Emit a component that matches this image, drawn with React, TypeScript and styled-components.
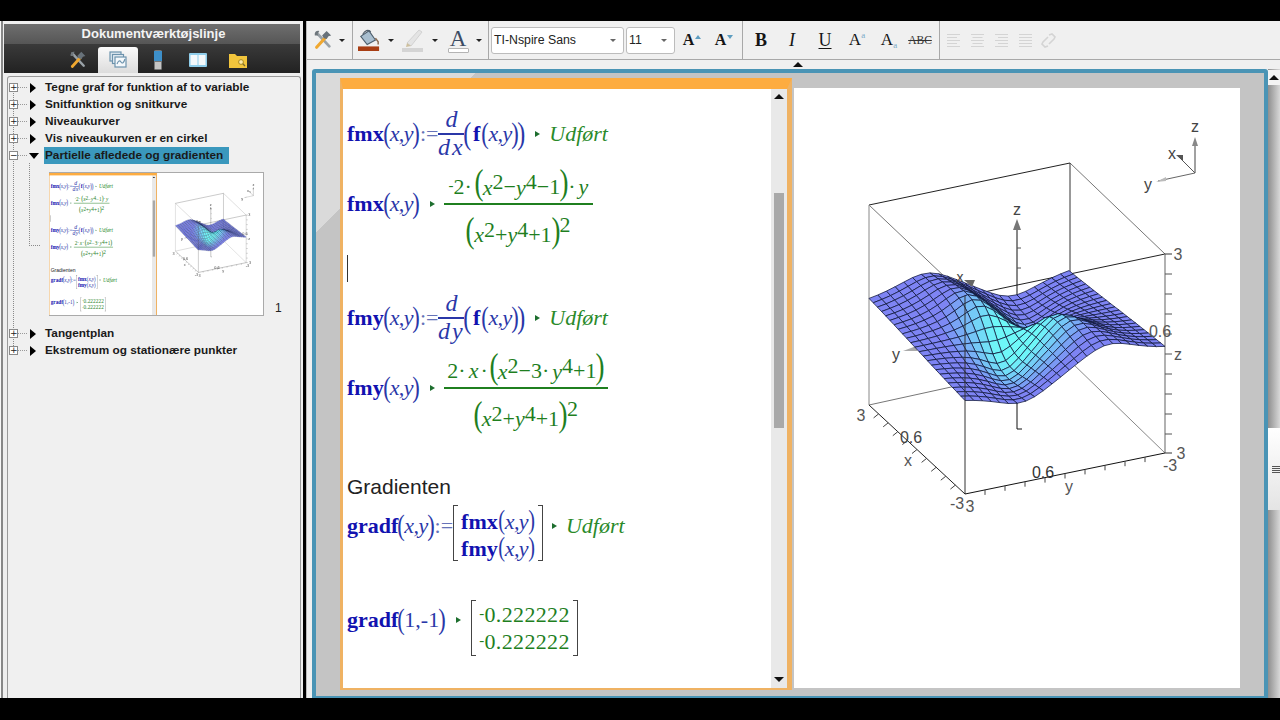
import React, { useMemo } from "react";
import styled, { createGlobalStyle } from "styled-components";

const Global = createGlobalStyle`
  html, body { margin: 0; padding: 0; background: #000; width: 1280px; height: 720px; overflow: hidden; }
  * { box-sizing: border-box; }
`;

const Root = styled.div`
  width: 1280px; height: 720px; background: #000; padding: 21px 0 22px; display: flex;
  font-family: "Liberation Sans", Arial, sans-serif;
`;

/* ---------- Sidebar ---------- */
const Sidebar = styled.aside`
  width: 303px; height: 677px; background: #efefef; padding: 3px 3px 0 4px;
  border-left: 1px solid #f8f8f8; display: flex; flex-direction: column;
  box-shadow: inset 3px 0 0 -1px #888;
`;
const SideTitle = styled.div`
  height: 20px; margin-left: -1px; padding-left: 3px; background: linear-gradient(#6e6e6e, #565656); color: #f4f4f4;
  font-size: 13px; font-weight: bold; text-align: center; line-height: 20px;
`;
const TabBar = styled.div`
  height: 29px; margin-left: -1px; background: linear-gradient(#3a3a3a, #222); display: flex; align-items: flex-end;
  padding-left: 54px;
`;
const Tab = styled.div<{ $active?: boolean }>`
  width: 40px; height: 26px; display: flex; align-items: center; justify-content: center;
  border-radius: 3px 3px 0 0; background: ${(p) => (p.$active ? "linear-gradient(#fafafa,#dcdcdc)" : "transparent")};
`;
const TreePanel = styled.div`
  position: relative; flex: 1; margin: 3px 0 0 2px; width: 294px; background: #f0f0f0;
  border: 1px solid #9a9a9a; border-bottom: none; border-radius: 3px 3px 0 0; padding: 2px 0 0 1px;
`;
const VDots = styled.div<{ $left: number; $top: number; $h: number }>`
  position: absolute; left: ${(p) => p.$left}px; top: ${(p) => p.$top}px; height: ${(p) => p.$h}px;
  border-left: 1px dotted #8a8a8a;
`;
const HDots = styled.div<{ $left: number; $top: number; $w: number }>`
  position: absolute; left: ${(p) => p.$left}px; top: ${(p) => p.$top}px; width: ${(p) => p.$w}px;
  border-top: 1px dotted #8a8a8a;
`;
const TreeRow = styled.div`
  display: flex; align-items: center; height: 17px;
`;
const PlusBox = styled.span`
  position: relative; z-index: 1; width: 9px; height: 9px; background: #fff; border: 1px solid #8a8a8a; flex: none;
  color: #222; font-size: 9px; line-height: 7px; text-align: center; font-family: "DejaVu Sans", sans-serif;
`;
const RowDots = styled.span`
  width: 9px; border-top: 1px dotted #999; flex: none;
`;
const ArrowSlot = styled.span`
  width: 17px; flex: none; display: flex; padding-left: 3px;
`;
const TriRight = styled.span`
  width: 0; height: 0; border-left: 6px solid #000; border-top: 5px solid transparent; border-bottom: 5px solid transparent;
`;
const TriDown = styled.span`
  width: 0; height: 0; margin-left: -1px; border-top: 6px solid #000; border-left: 5px solid transparent; border-right: 5px solid transparent;
`;
const RowLabel = styled.span<{ $selected?: boolean }>`
  font-size: 11.8px; font-weight: bold; line-height: 17px; height: 17px; color: #1a1a1a; white-space: nowrap;
  padding: 0 6px 0 1px; background: ${(p) => (p.$selected ? "#3a98bd" : "transparent")};
`;
const ThumbRow = styled.div`
  display: flex; margin: 8px 0 9px 40px; align-items: flex-end;
`;
const ThumbFrame = styled.div`
  width: 215px; height: 144px; overflow: hidden; border-right: 1px solid #aaa; border-top: 1px solid #aaa; border-bottom: 1px solid #aaa; background: #fff;
`;
const ThumbScale = styled.div`
  width: 900px; transform: scale(0.239); transform-origin: 0 0;
`;
const PageNumber = styled.span`
  font-size: 12px; color: #222; margin: 0 0 1px 11px;
`;

/* ---------- Toolbar ---------- */
const Main = styled.main`
  flex: 1; height: 677px; background: #f0f0f0; margin-left: 3px; border-left: 1px solid #bbb; display: flex; flex-direction: column;
`;
const Toolbar = styled.div`
  height: 39px; flex: none; display: flex; align-items: stretch; border-bottom: 1px solid #a8a8a8;
`;
const ToolGroup = styled.div<{ $w?: number; $pl: number }>`
  display: flex; align-items: center; padding-left: ${(p) => p.$pl}px; width: ${(p) => (p.$w ? `${p.$w}px` : "auto")};
  flex: none; border-right: 1px solid ${(p) => (p.$w ? "#a8a8a8" : "transparent")};
`;
const Slot = styled.div<{ $w: number }>`
  width: ${(p) => p.$w}px; display: flex; justify-content: center; align-items: center; flex: none; height: 100%;
  font-family: "Liberation Serif", serif; color: #151515;
`;
const Caret = styled.span<{ $color?: string }>`
  width: 0; height: 0; border-top: 3px solid ${(p) => p.$color ?? "#222"}; border-left: 3px solid transparent; border-right: 3px solid transparent;
`;
const Select = styled.div<{ $w: number }>`
  width: ${(p) => p.$w}px; height: 27px; background: #fff; border: 1px solid #bcbcbc; border-radius: 3px; display: flex;
  align-items: center; justify-content: space-between; padding: 0 7px 0 2px; font-size: 12.3px; color: #222; flex: none;
`;
const SmallGap = styled.div`width: 2px; flex: none;`;
const Glyph = styled.span<{ $size: number; $b?: boolean; $i?: boolean; $u?: boolean }>`
  font-size: ${(p) => p.$size}px; font-weight: ${(p) => (p.$b ? "bold" : "normal")}; font-style: ${(p) => (p.$i ? "italic" : "normal")};
  text-decoration: ${(p) => (p.$u ? "underline" : "none")}; text-underline-offset: 2px;
`;
const Small = styled.span<{ $align: number }>`
  font-size: 9px; color: #7aaac8; vertical-align: ${(p) => p.$align}px; font-family: "Liberation Serif", serif;
`;
const MiniTri = styled.span<{ $down?: boolean }>`
  display: inline-block; width: 0; height: 0; margin: 0 0 6px 1px; border-left: 3px solid transparent; border-right: 3px solid transparent;
  ${(p) => (p.$down ? "border-top: 4px solid #5d9dc0;" : "border-bottom: 4px solid #5d9dc0;")}
`;
const Strike = styled.span`
  font-size: 11.5px; color: #333; text-decoration: line-through;
`;
const FontA = styled.span`
  display: flex; flex-direction: column; align-items: center; font-size: 23px; line-height: 21px; color: #3c4c64;
`;
const UnderBar = styled.span`
  width: 21px; height: 5px; background: #fff; border: 1px solid #b4b4b4; border-radius: 1px; margin-top: -1px;
`;
const StripBelow = styled.div`
  height: 9px; flex: none; padding: 2px 0 0 486px; display: flex;
`;
const UpTri = styled.span`
  width: 0; height: 0; border-bottom: 5px solid #111; border-left: 5px solid transparent; border-right: 5px solid transparent;
`;

/* ---------- Document frame ---------- */
const Work = styled.div`
  flex: 1; display: flex; min-height: 0; padding-left: 5px;
`;
const Frame = styled.div`
  width: 956px; height: 629px; border: 4px solid #4a94b5; border-bottom-width: 2px; border-radius: 3px 3px 0 0;
  background: linear-gradient(135deg, #dadada 113px, #c4c4c4 113px); padding: 5px 0 0 24px;
`;
const OuterScroll = styled.div`
  width: 12px; height: 629px; flex: none; background: linear-gradient(90deg, #8f8f8f, #d8d8d8); display: flex; flex-direction: column;
`;
const OuterArrow = styled.div`
  height: 15px; background: #f4f4f4; display: flex; align-items: center; justify-content: center; margin-top: 1px;
`;
const OuterThumb = styled.div`
  height: 82px; margin-top: 343px; background: linear-gradient(#ffffff, #e4e4e4); display: flex; flex-direction: column; gap: 1px;
  align-items: flex-end; justify-content: center;
`;
const Grip = styled.span`
  width: 8px; height: 1px; background: #555;
`;

const DocRow = styled.div`
  display: flex; width: 900px; height: 612px;
`;
const Pane = styled.div`
  width: 452px; height: 612px; flex: none; background: #fff; border: 3px solid #efb263; border-top: 11px solid #fdac40; border-right-width: 5px; border-bottom-width: 2px; display: flex;
`;
const Sheet = styled.div`
  flex: 1; display: flex; flex-direction: column; padding: 20px 0 0 4px; background: #fff; font-family: "Liberation Serif", serif; overflow: hidden;
`;
const PaneScroll = styled.div`
  width: 16px; flex: none; background: #e9e9e9; display: flex; flex-direction: column; align-items: center; padding-top: 5px;
`;
const ScrollThumb = styled.div`
  width: 10px; height: 235px; background: #a9a9a9; margin: 94px 0 249px;
`;
const DownTri = styled.span`
  width: 0; height: 0; border-top: 5px solid #111; border-left: 5px solid transparent; border-right: 5px solid transparent;
`;
const PlotSheet = styled.div`
  width: 446px; height: 600px; margin: 10px 0 0 2px; background: #fff; flex: none;
`;

/* ---------- Math ---------- */
const MathRow = styled.div<{ $h: number; $mt?: number }>`
  display: flex; align-items: center; height: ${(p) => p.$h}px; margin-top: ${(p) => p.$mt ?? 0}px; font-size: 22px; line-height: 1; white-space: nowrap; flex: none;
`;
const Fn = styled.span<{ $mx?: number }>`
  font-weight: bold; color: #1212b0; margin: 0 ${(p) => p.$mx ?? 0}px;
`;
const Arg = styled.span`
  font-style: italic; color: #2a37a8; letter-spacing: -0.6px;
`;
const Num = styled.span`
  color: #2a37a8;
`;
const Op = styled.span`
  color: #6673b8; margin: 0 0 0 1px;
`;
const Paren = styled.span<{ $s: number; $c?: string }>`
  font-size: ${(p) => p.$s}px; line-height: 1; font-weight: normal; font-style: normal; display: inline-block;
  color: ${(p) => p.$c ?? "#2a37a8"}; margin: 0 -${(p) => Math.round(p.$s * 0.05)}px; transform: scaleX(0.75) translateY(-1px);
`;
const Arrow = styled.span<{ $l?: number; $r?: number }>`
  width: 0; height: 0; flex: none; margin: 0 ${(p) => p.$r ?? 9}px 0 ${(p) => p.$l ?? 11}px; border-left: 5px solid #1d6e2e;
  border-top: 3px solid transparent; border-bottom: 3px solid transparent;
`;
const Done = styled.span`
  color: #2a8a2a; font-style: italic;
`;
const Frac = styled.span<{ $w: number }>`
  display: inline-flex; flex-direction: column; align-items: center; flex: none; width: ${(p) => p.$w}px;
`;
const DFracTop = styled.span`
  display: flex; height: 24px; align-items: flex-end; justify-content: center; color: #2a37a8; width: 100%; font-size: 24px; padding-bottom: 2px;
`;
const DFracBottom = styled.span`
  display: flex; height: 24px; align-items: flex-start; justify-content: center; color: #2a37a8; width: 100%; font-size: 24px; letter-spacing: 2px;
`;
const GreenPart = styled.span<{ $pt?: number }>`
  display: flex; height: 41px; align-items: center; justify-content: center; color: #1f7f1f; width: 100%; padding-top: ${(p) => p.$pt ?? 0}px;
`;
const FracLine = styled.span<{ $c: string }>`
  display: block; width: 100%; height: 2px; background: ${(p) => p.$c}; flex: none;
`;
const It = styled.span`
  font-style: italic;
`;
const Shift = styled.span<{ $y: number; $mr?: number; $i?: boolean; $s?: number }>`
  display: inline-block; transform: translateY(${(p) => p.$y}px); margin-right: ${(p) => p.$mr ?? 0}px;
  font-style: ${(p) => (p.$i ? "italic" : "normal")}; font-size: ${(p) => p.$s ?? 22}px;
`;
const Bracket = styled.span<{ $right?: boolean; $c: string }>`
  width: 5px; align-self: stretch; flex: none; border: 1px solid ${(p) => p.$c};
  ${(p) => (p.$right ? "border-left: none;" : "border-right: none;")}
`;
const Matrix = styled.span<{ $h: number; $dy: number }>`
  display: inline-flex; height: ${(p) => p.$h}px; flex: none; transform: translateY(${(p) => p.$dy}px);
`;
const MatrixCol = styled.span<{ $pt?: number }>`
  display: flex; flex-direction: column; justify-content: space-around; padding: ${(p) => p.$pt ?? 0}px 3px 0;
`;
const MatrixCell = styled.span`
  display: flex; align-items: center; height: 27px;
`;
const GNum = styled.span`
  color: #1f7f1f; letter-spacing: 0.35px; font-size: 22px;
`;
const Tiny = styled.span`
  font-size: 15px; vertical-align: 4px;
`;
const Cursor = styled.div`
  width: 1px; height: 27px; margin-top: 9px; background: #333; flex: none;
`;
const Heading = styled.div`
  font-family: "Liberation Sans", sans-serif; font-size: 21px; line-height: 24px; color: #222; margin-top: 45px; flex: none;
`;

/* ---------- Plot ---------- */
const f = (x: number, y: number) => (2 * x * y) / (x * x + y * y * y * y + 1);
const P = (x: number, y: number, z: number): [number, number] => [
  1017 - 16 * x - 33.33 * y,
  329 - 14.83 * x + 6.83 * y - 33.17 * z,
];
const mix = (t: number) => {
  const a = [126, 132, 244];
  const b = [110, 248, 248];
  const c = a.map((v, i) => Math.round(v + (b[i] - v) * t));
  return `rgb(${c[0]},${c[1]},${c[2]})`;
};

const Surface: React.FC = () => {
  const cells = useMemo(() => {
    const n = 23;
    const out: { pts: string; fill: string; key: string }[] = [];
    const step = 6 / n;
    for (let i = 0; i < n; i++) {
      const x0 = 3 - i * step;
      const x1 = x0 - step;
      for (let j = 0; j < n; j++) {
        const y0 = -3 + j * step;
        const y1 = y0 + step;
        const pts = [
          P(x0, y0, f(x0, y0)),
          P(x1, y0, f(x1, y0)),
          P(x1, y1, f(x1, y1)),
          P(x0, y1, f(x0, y1)),
        ]
          .map((p) => `${p[0].toFixed(1)},${p[1].toFixed(1)}`)
          .join(" ");
        const cx = (x0 + x1) / 2;
        const cy = (y0 + y1) / 2;
        const d = Math.hypot(cx + 0.3, (cy - 0.1) * 1.15);
        let t = 1.45 - 0.62 * d;
        const shade = Math.max(0, Math.min(1, 0.5 * (f(cx - 0.1, cy) - f(cx + 0.1, cy)) / 0.2));
        t = t - 0.25 * shade;
        t = Math.max(0, Math.min(1, t));
        out.push({ pts, fill: mix(t), key: `${i}-${j}` });
      }
    }
    return out;
  }, []);
  return (
    <>
      {cells.map((c) => (
        <polygon key={c.key} points={c.pts} fill={c.fill} stroke="#0e1638" strokeWidth={0.75} />
      ))}
    </>
  );
};

const ticks = (ax: number, ay: number, bx: number, by: number, n: number, dx: number, dy: number) =>
  Array.from({ length: n - 1 }, (_, i) => {
    const t = (i + 1) / n;
    const px = ax + (bx - ax) * t;
    const py = ay + (by - ay) * t;
    return <line key={i} x1={px} y1={py} x2={px + dx} y2={py + dy} stroke="#444" strokeWidth={1} />;
  });

const PL: React.FC<{ x: number; y: number; c?: string; s?: number; children: React.ReactNode }> = ({ x, y, c = "#444", s = 16, children }) => (
  <text x={x} y={y} fill={c} fontSize={s} fontFamily="'Liberation Sans', sans-serif" textAnchor="middle">
    {children}
  </text>
);

const Plot: React.FC = () => (
  <svg width="446" height="600" viewBox="794 88 446 600" style={{ display: "block" }}>
    <g fill="none" strokeWidth={1}>
      <polyline points="869,205 1070,163" stroke="#222" />
      <polyline points="1070,163 1165,254" stroke="#777" />
      <polyline points="869,205 965,296" stroke="#777" />
      <polyline points="965,296 1165,254" stroke="#222" />
      <line x1="869" y1="205" x2="869" y2="405" stroke="#888" />
      <line x1="1165" y1="254" x2="1165" y2="453" stroke="#888" strokeWidth={1.3} />
      <line x1="1070" y1="163" x2="1070" y2="361" stroke="#333" />
      <polyline points="869,405 1070,361" stroke="#777" />
      <polyline points="1070,361 1165,453" stroke="#888" />
      <line x1="1017" y1="229" x2="1017" y2="429" stroke="#111" />
      <line x1="1017" y1="429" x2="1022" y2="429" stroke="#111" />
      <line x1="1017" y1="248" x2="1021" y2="248" stroke="#555" />
      <line x1="1017" y1="268" x2="1021" y2="268" stroke="#555" />
    </g>
    <polygon points="1017,219 1013,230 1021,230" fill="#777" />
    <polygon points="903,351 919,345 917,351" fill="#aaa" />
    <Surface />
    <polygon points="964,280 975,280 972,287" fill="#666" />
    <g fill="none">
      <line x1="965" y1="296" x2="965" y2="494" stroke="#333" strokeWidth={1} />
      <polyline points="869,405 965,494" stroke="#222" />
      <polyline points="965,494 1165,453" stroke="#111" />
      {ticks(869, 405, 965, 494, 10, -5, 4)}
      {ticks(965, 494, 1165, 453, 10, 0, 5)}
      {[274, 294, 314, 334, 354, 374, 394, 414, 434].map((y) => (
        <line key={y} x1="1165" y1={y} x2="1172" y2={y} stroke="#555" />
      ))}
      <line x1="1165" y1="254" x2="1172" y2="254" stroke="#333" />
      <line x1="1165" y1="453" x2="1172" y2="453" stroke="#333" />
    </g>
    <PL x={1017} y={215}>z</PL>
    <PL x={960} y={282} s={14}>x</PL>
    <PL x={896} y={360}>y</PL>
    <PL x={1160} y={337} c="#555">0.6</PL>
    <PL x={1178} y={360} c="#555">z</PL>
    <PL x={1178} y={260} c="#555">3</PL>
    <PL x={861} y={421} c="#555">3</PL>
    <PL x={911} y={443} c="#444">0.6</PL>
    <PL x={908} y={466} c="#555">x</PL>
    <PL x={1043} y={478} c="#333">0.6</PL>
    <PL x={1069} y={492} c="#555">y</PL>
    <PL x={957} y={509} c="#555">-3</PL>
    <PL x={970} y={512} c="#555">3</PL>
    <PL x={1170} y={471} c="#555">-3</PL>
    <PL x={1181} y={459} c="#555">3</PL>
    <g fill="none">
      <line x1="1195" y1="173" x2="1195" y2="142" stroke="#444" />
      <line x1="1195" y1="173" x2="1178" y2="156" stroke="#555" />
      <line x1="1195" y1="173" x2="1158" y2="181" stroke="#666" />
    </g>
    <polygon points="1195,137 1192,146 1198,146" fill="#888" />
    <polygon points="1176,155 1183,155 1183,161" fill="#555" />
    <polygon points="1156,182 1166,177 1166,181" fill="#bbb" />
    <PL x={1195} y={132}>z</PL>
    <PL x={1172} y={159}>x</PL>
    <PL x={1148} y={190}>y</PL>
  </svg>
);

/* ---------- Formula pieces ---------- */
const XY: React.FC<{ s?: number }> = ({ s = 30 }) => (
  <>
    <Paren $s={s}>(</Paren>
    <Arg>x,y</Arg>
    <Paren $s={s}>)</Paren>
  </>
);
const DD: React.FC<{ v: string }> = ({ v }) => (
  <>
    <Op>:=</Op>
    <Frac $w={26}>
      <DFracTop><It>d</It></DFracTop>
      <FracLine $c="#2a37a8" />
      <DFracBottom><It>d{v}</It></DFracBottom>
    </Frac>
    <Paren $s={32}>(</Paren>
    <Fn $mx={2}>f</Fn>
    <XY />
    <Paren $s={32}>)</Paren>
    <Arrow $r={9} $l={11} />
    <Done>Udført</Done>
  </>
);
const G = "#1f7f1f";
const Denominator: React.FC = () => (
  <GreenPart $pt={11}>
    <Paren $s={36} $c={G}>(</Paren>
    <Shift $y={4} $i>x</Shift>
    <Shift $y={-1}>2</Shift>
    <Shift $y={4}>+</Shift>
    <Shift $y={4} $i>y</Shift>
    <Shift $y={-1}>4</Shift>
    <Shift $y={4}>+1</Shift>
    <Paren $s={36} $c={G}>)</Paren>
    <Shift $y={-6}>2</Shift>
  </GreenPart>
);

const Formulas: React.FC = () => (
  <>
    <MathRow $h={50}>
      <Fn>fmx</Fn><XY /><DD v="x" />
    </MathRow>
    <MathRow $h={84} $mt={3}>
      <Fn>fmx</Fn><XY /><Arrow />
      <Frac $w={149}>
        <GreenPart>
          <Shift $y={4} $mr={3}><Tiny>-</Tiny>2·</Shift>
          <Paren $s={36} $c={G}>(</Paren>
          <Shift $y={5} $i>x</Shift>
          <Shift $y={-1}>2</Shift>
          <Shift $y={4}>−</Shift>
          <Shift $y={5} $i>y</Shift>
          <Shift $y={-1}>4</Shift>
          <Shift $y={4}>−1</Shift>
          <Paren $s={36} $c={G}>)</Paren>
          <Shift $y={4} $mr={3}>·</Shift>
          <Shift $y={4} $i>y</Shift>
        </GreenPart>
        <FracLine $c={G} />
        <Denominator />
      </Frac>
    </MathRow>
    <Cursor />
    <MathRow $h={50} $mt={11}>
      <Fn>fmy</Fn><XY /><DD v="y" />
    </MathRow>
    <MathRow $h={84} $mt={3}>
      <Fn>fmy</Fn><XY /><Arrow />
      <Frac $w={164}>
        <GreenPart>
          <Shift $y={4} $mr={3}>2·</Shift>
          <Shift $y={4} $mr={2} $i>x</Shift>
          <Shift $y={4} $mr={2}>·</Shift>
          <Paren $s={36} $c={G}>(</Paren>
          <Shift $y={5} $i>x</Shift>
          <Shift $y={-1}>2</Shift>
          <Shift $y={4}>−</Shift>
          <Shift $y={4} $mr={3}>3·</Shift>
          <Shift $y={5} $i>y</Shift>
          <Shift $y={-1}>4</Shift>
          <Shift $y={4}>+1</Shift>
          <Paren $s={36} $c={G}>)</Paren>
        </GreenPart>
        <FracLine $c={G} />
        <Denominator />
      </Frac>
    </MathRow>
    <Heading>Gradienten</Heading>
    <MathRow $h={60} $mt={-3}>
      <Fn>gradf</Fn><XY /><Op>:=</Op>
      <Matrix $h={56} $dy={7}>
        <Bracket $c="#444" />
        <MatrixCol $pt={3}>
          <MatrixCell><Fn>fmx</Fn><XY s={27} /></MatrixCell>
          <MatrixCell><Fn>fmy</Fn><XY s={27} /></MatrixCell>
        </MatrixCol>
        <Bracket $right $c="#444" />
      </Matrix>
      <Arrow $l={9} $r={9} />
      <Done>Udført</Done>
    </MathRow>
    <MathRow $h={60} $mt={34}>
      <Fn>gradf</Fn><Paren $s={30}>(</Paren><Num>1,-1</Num><Paren $s={30}>)</Paren>
      <Arrow $l={11} $r={10} />
      <Matrix $h={56} $dy={8}>
        <Bracket $c="#444" />
        <MatrixCol $pt={1}>
          <MatrixCell><GNum><Tiny>-</Tiny>0.222222</GNum></MatrixCell>
          <MatrixCell><GNum><Tiny>-</Tiny>0.222222</GNum></MatrixCell>
        </MatrixCol>
        <Bracket $right $c="#444" />
      </Matrix>
    </MathRow>
  </>
);

const DocumentPage: React.FC = () => (
  <DocRow>
    <Pane>
      <Sheet>
        <Formulas />
      </Sheet>
      <PaneScroll>
        <UpTri />
        <ScrollThumb />
        <DownTri />
      </PaneScroll>
    </Pane>
    <PlotSheet>
      <Plot />
    </PlotSheet>
  </DocRow>
);

/* ---------- Icons ---------- */
const ToolsIcon: React.FC<{ size?: number }> = ({ size = 20 }) => (
  <svg width={size} height={size} viewBox="0 0 22 22">
    <path d="M4 3 L18 18" stroke="#9aa2a8" strokeWidth="3" strokeLinecap="round" />
    <path d="M2 6 A4 4 0 0 1 7 1 L5 4 L6 6 L8 6 Z" fill="#6e767c" />
    <path d="M4 19 L14 8" stroke="#f0a830" strokeWidth="3.4" strokeLinecap="round" />
    <path d="M10 6 L15 1 L20 6 L17 7 L15 10 L12 9 Z" fill="#68727a" />
  </svg>
);
const BucketIcon: React.FC = () => (
  <svg width="24" height="26" viewBox="0 0 24 26">
    <path d="M3 9 L12 3 L19 13 L10 18 Z" fill="#a9bfd0" stroke="#4d5e6c" strokeWidth="1.2" />
    <path d="M5 7 Q9 0 14 4" fill="none" stroke="#55626e" strokeWidth="1.2" />
    <path d="M19 11 L22 15 L22 18" fill="none" stroke="#8a6a50" strokeWidth="1.6" />
    <rect x="0" y="20" width="23" height="5" fill="#a83e14" />
  </svg>
);
const MarkerIcon: React.FC = () => (
  <svg width="22" height="24" viewBox="0 0 22 24">
    <path d="M5 15 L17 2 L20 4 L9 18 Z" fill="#e4e4e4" stroke="#d2d2d2" />
    <path d="M5 15 L9 18 L4 19 Z" fill="#cdbf9e" />
    <rect x="0" y="20" width="21" height="4" fill="#d4d4d4" />
  </svg>
);
const TabDocs: React.FC = () => (
  <svg width="18" height="18" viewBox="0 0 18 18" fill="none" stroke="#6d93ad" strokeWidth="1.2">
    <rect x="1" y="1" width="11" height="9" fill="#dfe9f0" />
    <rect x="3.5" y="3.5" width="11" height="9" fill="#e9f0f5" />
    <rect x="6" y="6" width="11" height="10" fill="#f4f8fb" />
    <path d="M8 13 Q10 8 12 11 T16 8" />
  </svg>
);
const TabDevice: React.FC = () => (
  <svg width="12" height="20" viewBox="0 0 12 20">
    <rect x="2" y="0" width="8" height="20" rx="1.5" fill="#777" />
    <rect x="2" y="1" width="8" height="10" fill="#3d8fc9" />
    <rect x="3" y="12" width="6" height="7" fill="#c4c4c4" />
  </svg>
);
const TabBook: React.FC = () => (
  <svg width="18" height="14" viewBox="0 0 18 14">
    <rect x="0" y="0" width="18" height="14" rx="1" fill="#8fcdea" />
    <rect x="1.5" y="2" width="7" height="10" fill="#f4f8fa" />
    <rect x="9.5" y="2" width="7" height="10" fill="#f4f8fa" />
  </svg>
);
const TabFolder: React.FC = () => (
  <svg width="18" height="15" viewBox="0 0 18 15">
    <path d="M0 1 H6 L8 3 H18 V15 H0 Z" fill="#f2c53c" />
    <circle cx="12" cy="9" r="2.4" fill="#fbe9a8" stroke="#a98a20" />
    <path d="M13.8 10.8 L16 13" stroke="#7a6a30" strokeWidth="1.3" />
  </svg>
);
const AlignIcon: React.FC<{ kind: "l" | "c" | "r" | "j" }> = ({ kind }) => {
  const rows = [13, 10, 13, 10, 13];
  return (
    <svg width="13" height="13" viewBox="0 0 13 13" stroke="#d4d4d4" strokeWidth="1">
      {rows.map((w, i) => {
        const width = kind === "j" ? 13 : w;
        const x = kind === "l" || kind === "j" ? 0 : kind === "c" ? (13 - width) / 2 : 13 - width;
        return <line key={i} x1={x} x2={x + width} y1={i * 3 + 0.5} y2={i * 3 + 0.5} />;
      })}
    </svg>
  );
};
const LinkIcon: React.FC = () => (
  <svg width="15" height="15" viewBox="0 0 15 15" fill="none" stroke="#d4d4d4" strokeWidth="1.6">
    <path d="M8 2 L11 1 L14 4 L13 6 L8 11" />
    <path d="M7 13 L4 14 L1 11 L2 9 L7 4" />
  </svg>
);

const Row: React.FC<{ label: string; open?: boolean }> = ({ label, open }) => (
  <TreeRow>
    <PlusBox>{open ? "−" : "+"}</PlusBox>
    <RowDots />
    <ArrowSlot>{open ? <TriDown /> : <TriRight />}</ArrowSlot>
    <RowLabel $selected={open}>{label}</RowLabel>
  </TreeRow>
);

export default function App() {
  return (
    <Root>
      <Global />
      <Sidebar>
        <SideTitle>Dokumentværktøjslinje</SideTitle>
        <TabBar>
          <Tab><ToolsIcon size={18} /></Tab>
          <Tab $active><TabDocs /></Tab>
          <Tab><TabDevice /></Tab>
          <Tab><TabBook /></Tab>
          <Tab><TabFolder /></Tab>
        </TabBar>
        <TreePanel>
          <VDots $left={5} $top={14} $h={255} />
          <VDots $left={21} $top={86} $h={83} />
          <HDots $left={21} $top={168} $w={11} />
          <Row label="Tegne graf for funktion af to variable" />
          <Row label="Snitfunktion og snitkurve" />
          <Row label="Niveaukurver" />
          <Row label="Vis niveaukurven er en cirkel" />
          <Row label="Partielle afledede og gradienten" open />
          <ThumbRow>
            <ThumbFrame>
              <ThumbScale>
                <DocumentPage />
              </ThumbScale>
            </ThumbFrame>
            <PageNumber>1</PageNumber>
          </ThumbRow>
          <Row label="Tangentplan" />
          <Row label="Ekstremum og stationære punkter" />
        </TreePanel>
      </Sidebar>
      <Main>
        <Toolbar>
          <ToolGroup $w={46} $pl={4}>
            <Slot $w={24}><ToolsIcon /></Slot>
            <Slot $w={14}><Caret /></Slot>
          </ToolGroup>
          <ToolGroup $w={136} $pl={5}>
            <Slot $w={22}><BucketIcon /></Slot>
            <Slot $w={22}><Caret /></Slot>
            <Slot $w={22}><MarkerIcon /></Slot>
            <Slot $w={22}><Caret /></Slot>
            <Slot $w={24}>
              <FontA>A<UnderBar /></FontA>
            </Slot>
            <Slot $w={18}><Caret /></Slot>
          </ToolGroup>
          <ToolGroup $w={254} $pl={2}>
            <Select $w={133}>TI-Nspire Sans<Caret $color="#666" /></Select>
            <SmallGap />
            <Select $w={49}>11<Caret $color="#666" /></Select>
            <Slot $w={34}><Glyph $size={16} $b>A</Glyph><MiniTri /></Slot>
            <Slot $w={30}><Glyph $size={16} $b>A</Glyph><MiniTri $down /></Slot>
          </ToolGroup>
          <ToolGroup $w={197} $pl={3}>
            <Slot $w={30}><Glyph $size={18} $b>B</Glyph></Slot>
            <Slot $w={32}><Glyph $size={18} $i>I</Glyph></Slot>
            <Slot $w={34}><Glyph $size={18} $u>U</Glyph></Slot>
            <Slot $w={30}><span><Glyph $size={17}>A</Glyph><Small $align={7}>a</Small></span></Slot>
            <Slot $w={34}><span><Glyph $size={17}>A</Glyph><Small $align={-3}>a</Small></span></Slot>
            <Slot $w={28}><Strike>ABC</Strike></Slot>
          </ToolGroup>
          <ToolGroup $pl={1}>
            <Slot $w={24}><AlignIcon kind="l" /></Slot>
            <Slot $w={24}><AlignIcon kind="c" /></Slot>
            <Slot $w={24}><AlignIcon kind="r" /></Slot>
            <Slot $w={24}><AlignIcon kind="j" /></Slot>
            <Slot $w={22}><LinkIcon /></Slot>
          </ToolGroup>
        </Toolbar>
        <StripBelow><UpTri /></StripBelow>
        <Work>
          <Frame>
            <DocumentPage />
          </Frame>
          <OuterScroll>
            <OuterArrow><UpTri /></OuterArrow>
            <OuterThumb>
              <Grip /><Grip /><Grip /><Grip />
            </OuterThumb>
          </OuterScroll>
        </Work>
      </Main>
    </Root>
  );
}
